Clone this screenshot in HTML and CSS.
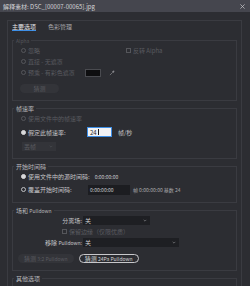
FILE: index.html
```html
<!DOCTYPE html>
<html lang="zh-CN">
<head>
    <meta charset="UTF-8">
    <title>解释素材</title>
    <link rel="stylesheet" href="styles.css">
</head>
<body>
    <div class="titlebar">
        <span class="title">解释素材: DSC_[00007-00065].jpg</span>
        <svg class="close" viewBox="0 0 6 6"><path d="M0.5 0.5 L5.5 5.5 M5.5 0.5 L0.5 5.5" stroke="#c4c4c7" stroke-width="0.9"/></svg>
    </div>

    <div class="window">
        <div class="panel">
            <div class="tabs">
                <span class="tab active">主要选项</span>
                <span class="tab">色彩管理</span>
            </div>

            <!-- Alpha -->
            <fieldset class="group dim">
                <legend class="small">Alpha</legend>
                <div class="row">
                    <span class="cell-left"><span class="radio"></span>忽略</span>
                    <span class="check"></span>反转 Alpha
                </div>
                <div class="row"><span class="radio"></span>直接 - 无遮罩</div>
                <div class="row">
                    <span class="radio"></span><span class="label-swatch">预乘 - 有彩色遮罩</span>
                    <span class="swatch"></span>
                    <svg class="dropper" viewBox="0 0 10 10"><path d="M1.5 8.5 L6 4" stroke="#8a8a8e" stroke-width="1.2"/><path d="M5 3 L7 1.2 Q8 0.6 8.6 1.4 Q9.4 2 8.8 3 L7 5 Z" fill="#8a8a8e"/></svg>
                </div>
                <button class="pill btn-guess" disabled>猜测</button>
            </fieldset>

            <!-- 帧速率 -->
            <fieldset class="group">
                <legend>帧速率</legend>
                <div class="row dim"><span class="radio"></span>使用文件中的帧速率</div>
                <div class="row row-fps">
                    <span class="radio on"></span><span class="label-fps">假定此帧速率:</span>
                    <span class="fps-input">24<span class="caret"></span></span>
                    <span class="unit">帧/秒</span>
                </div>
                <div class="select select-dim">丢帧<svg class="chev" viewBox="0 0 6 4"><path d="M1 1 L3 3 L5 1" fill="none" stroke="#55565b" stroke-width="0.8"/></svg></div>
            </fieldset>

            <!-- 开始时间码 -->
            <fieldset class="group">
                <legend>开始时间码</legend>
                <div class="row"><span class="radio on"></span>使用文件中的源时间码:<span class="tc-value">0:00:00:00</span></div>
                <div class="row row-tc">
                    <span class="radio"></span><span class="label-tc">覆盖开始时间码:</span>
                    <span class="tc-input">0:00:00:00</span>
                    <span class="tc-note">帧 0:00:00:00 基数 24</span>
                </div>
            </fieldset>

            <!-- 场和 Pulldown -->
            <fieldset class="group">
                <legend>场和 <span class="latin">Pulldown</span></legend>
                <div class="row">
                    <span class="field-label">分离场:</span>
                    <div class="select select-short">关<svg class="chev" viewBox="0 0 6 4"><path d="M1 1 L3 3 L5 1" fill="none" stroke="#a0a0a4" stroke-width="0.8"/></svg></div>
                </div>
                <div class="row dim row-check"><span class="check"></span>保留边缘（仅限优质）</div>
                <div class="row">
                    <span class="field-label">移除 <span class="latin">Pulldown:</span></span>
                    <div class="select select-long">关<svg class="chev" viewBox="0 0 6 4"><path d="M1 1 L3 3 L5 1" fill="none" stroke="#a0a0a4" stroke-width="0.8"/></svg></div>
                </div>
                <div class="buttons">
                    <button class="pill" disabled>猜测 <span class="latin">3:2 Pulldown</span></button>
                    <button class="pill outline">猜测 <span class="latin">24Pa Pulldown</span></button>
                </div>
            </fieldset>

            <fieldset class="group">
                <legend>其他选项</legend>
            </fieldset>
        </div>
    </div>
</body>
</html>
```

FILE: styles.css
```css
* {
    box-sizing: border-box;
}
body {
    margin: 0;
    width: 250px;
    height: 286px;
    overflow: hidden;
    background-color: #2c2d32;
    font-family: "Noto Sans CJK SC", "Noto Sans", sans-serif;
    font-size: 6px;
    line-height: 7px;
    color: #c6c6c9;
}
.titlebar {
    height: 12px;
    background-color: #45464e;
    display: flex;
    align-items: center;
    justify-content: space-between;
    padding: 0 5px 0 3px;
}
.title {
    font-size: 6px;
    color: #d4d4d6;
}
.close {
    width: 5px;
    height: 5px;
}
.window {
    padding-top: 8px;
}
.panel {
    margin-left: 7px;
    width: 235px;
    height: 274px;
    border: 1px solid #3a3b41;
    border-bottom: none;
}
.tabs {
    display: flex;
    gap: 12px;
    padding: 2px 0 0 4px;
    margin-bottom: 6px;
}
.tab {
    color: #a7a7aa;
}
.tab.active {
    color: #e6e6e8;
    border-bottom: 1px solid #3d8ee6;
}
.group {
    margin: 0 4px 4px;
    padding: 1px 0 7px 8px;
    border: 1px solid #3a3b41;
    min-width: 0;
}
.group legend {
    margin-left: -7px;
    padding: 0 2px;
    color: #b9b9bc;
}
.group legend.small {
    font-size: 5px;
    color: #55565b;
}
.latin {
    font-size: 5px;
}
.row {
    display: flex;
    align-items: center;
    height: 11px;
    white-space: nowrap;
}
.dim {
    color: #5a5b60;
}
.radio {
    width: 5px;
    height: 5px;
    border: 1px solid #c0c0c3;
    border-radius: 50%;
    margin-right: 2px;
    flex: none;
}
.radio.on {
    background-color: #d8d8da;
    border-color: #d8d8da;
}
.dim .radio, .dim .check {
    border-color: #55565b;
}
.check {
    width: 5px;
    height: 5px;
    border: 1px solid #c0c0c3;
    margin-right: 2px;
    flex: none;
}
.cell-left {
    display: flex;
    align-items: center;
    width: 105px;
}
.label-swatch {
    width: 57px;
}
.swatch {
    width: 16px;
    height: 8px;
    background-color: #0e0e10;
    border: 1px solid #4a4b50;
}
.dropper {
    width: 6px;
    height: 6px;
    margin-left: 8px;
}
.pill {
    display: block;
    height: 9px;
    padding: 0 6px;
    border: 1px solid transparent;
    border-radius: 5px;
    font-family: inherit;
    font-size: 6px;
    line-height: 7px;
    background-color: #333439;
    color: #5a5b60;
}
.btn-guess {
    width: 39px;
    margin: 6px 0 0 -1px;
}
.row-fps {
    height: 12px;
    margin-top: 2px;
}
.label-fps {
    width: 59px;
}
.fps-input {
    width: 25px;
    height: 10px;
    padding: 1px 2px;
    background-color: #f2f2f4;
    border: 1px solid #3d8ee6;
    color: #1b1b1e;
    display: flex;
    align-items: center;
}
.caret {
    width: 1px;
    height: 6px;
    margin-left: 1px;
    background-color: #1b1b1e;
}
.unit {
    margin-left: 6px;
}
.select {
    height: 9px;
    padding: 0 3px 0 2px;
    display: flex;
    align-items: center;
    justify-content: space-between;
    background-color: #1e1f23;
    color: #d0d0d2;
}
.select-dim {
    width: 34px;
    margin: 4px 0 0 1px;
    background-color: #333439;
    color: #5a5b60;
}
.select-short {
    width: 67px;
}
.select-long {
    width: 96px;
}
.chev {
    width: 4px;
    height: 3px;
}
.tc-value {
    margin-left: 5px;
    font-size: 5px;
}
.row-tc {
    margin-top: 2px;
}
.label-tc {
    width: 60px;
}
.tc-input {
    width: 42px;
    height: 10px;
    padding: 0 2px;
    display: flex;
    align-items: center;
    background-color: #1c1d21;
    font-size: 5px;
}
.tc-note {
    margin-left: 3px;
    font-size: 5px;
    color: #a9a9ac;
}
.field-label {
    width: 62px;
    padding-right: 1px;
    text-align: right;
}
.row-check {
    padding-left: 41px;
}
.buttons {
    display: flex;
    gap: 5px;
    margin: 6px 0 0 -3px;
}
.buttons .pill {
    padding: 0 5px;
}
.pill.outline {
    background-color: transparent;
    border-color: #c8c8cb;
    color: #d4d4d6;
}
```
